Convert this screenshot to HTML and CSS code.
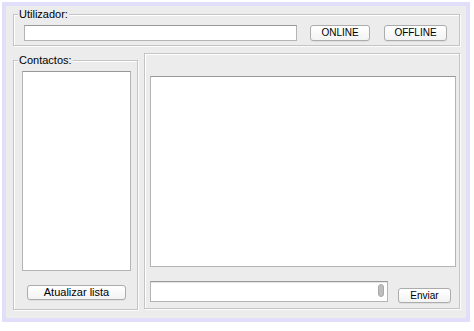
FILE: index.html
```html
<!DOCTYPE html>
<html>
<head>
<meta charset="utf-8">
<link rel="stylesheet" href="styles.css">
</head>
<body>
<div class="frame">
  <fieldset class="group user-group">
    <legend class="group-title">Utilizador:</legend>
    <div class="user-row">
      <div class="field user-field"></div>
      <button class="btn btn-online">ONLINE</button>
      <button class="btn btn-offline">OFFLINE</button>
    </div>
  </fieldset>
  <div class="main-row">
    <fieldset class="group contacts">
      <legend class="group-title contacts-title">Contactos:</legend>
      <div class="list"></div>
      <button class="btn btn-refresh">Atualizar lista</button>
    </fieldset>
    <div class="chat">
      <div class="chat-log"></div>
      <div class="send-row">
        <div class="field msg-field"><span class="thumb"></span></div>
        <button class="btn btn-send">Enviar</button>
      </div>
    </div>
  </div>
</div>
</body>
</html>
```

FILE: styles.css
```css
html, body {
  margin: 0;
  background: #ffffff;
}
body {
  padding: 2px;
  font-family: "Liberation Sans", Arial, sans-serif;
  color: #000000;
}
.frame {
  width: 460px;
  height: 312px;
  box-sizing: content-box;
  border: 4px solid #e0def9;
  background: #ececec;
  padding: 0;
  display: flex;
  flex-direction: column;
}
.frame > .user-group {
  margin: 2px 6px 0 7px;
}
.group {
  border: 1px solid #c4c4c4;
  box-shadow: inset 1px 1px 0 #ffffff, 1px 1px 0 #fbfbfb;
  min-width: 0;
  margin: 0;
}
.group-title {
  font-size: 11px;
  line-height: 13px;
  padding: 0 1px;
  background: #ececec;
  color: #000000;
}
.user-group {
  padding: 4px 11px 4px 10px;
}
.user-group .group-title {
  margin-left: -6px;
}
.user-row {
  display: flex;
  align-items: center;
  height: 16px;
}
.field {
  background: #ffffff;
  border: 1px solid #b4b4b4;
  border-top-color: #999999;
  box-sizing: border-box;
}
.user-field {
  width: 273px;
  height: 16px;
}
.btn {
  font-family: "Liberation Sans", Arial, sans-serif;
  font-size: 10px;
  color: #000000;
  background: linear-gradient(#ffffff, #f3f3f3);
  border: 1px solid #acacac;
  border-radius: 3px;
  box-shadow: 0 1px 0 rgba(0, 0, 0, 0.06);
  padding: 0;
  height: 16px;
  box-sizing: border-box;
  line-height: 14px;
}
.btn-online {
  width: 60px;
  margin-left: 13px;
}
.btn-offline {
  width: 63px;
  margin-left: 14px;
}
.main-row {
  display: flex;
  gap: 6px;
  margin: 7px 6px 0 7px;
  height: 257px;
}
.contacts {
  width: 125px;
  box-sizing: border-box;
  margin-top: 1px;
  padding: 4px 6px 9px 8px;
  display: flex;
  flex-direction: column;
}
.contacts .contacts-title {
  margin-left: -4px;
}
.list {
  width: 109px;
  height: 200px;
  background: #ffffff;
  border: 1px solid #b4b4b4;
  border-top-color: #999999;
  box-sizing: border-box;
}
.btn-refresh {
  align-self: center;
  width: 99px;
  height: 15px;
  margin-top: 14px;
  font-size: 11px;
  line-height: 13px;
}
.chat {
  width: 316px;
  height: 256px;
  box-sizing: border-box;
  border: 1px solid #c4c4c4;
  box-shadow: inset 1px 1px 0 #ffffff, 1px 1px 0 #fbfbfb;
  padding: 22px 3px 6px 5px;
  display: flex;
  flex-direction: column;
}
.chat-log {
  flex: 1;
  background: #ffffff;
  border: 1px solid #b4b4b4;
  border-top-color: #999999;
}
.send-row {
  display: flex;
  align-items: flex-end;
  margin-top: 14px;
}
.msg-field {
  width: 238px;
  height: 21px;
  display: flex;
  justify-content: flex-end;
  align-items: flex-start;
  padding: 2px 3px 0 0;
  box-shadow: inset 0 1px 0 #e4e4e4;
}
.thumb {
  width: 6px;
  height: 13px;
  border-radius: 3px;
  background: #bdbdbd;
  border: 1px solid #a9a9a9;
  box-sizing: border-box;
}
.btn-send {
  width: 53px;
  height: 15px;
  line-height: 13px;
  margin-left: 10px;
  margin-bottom: -1px;
}
```
